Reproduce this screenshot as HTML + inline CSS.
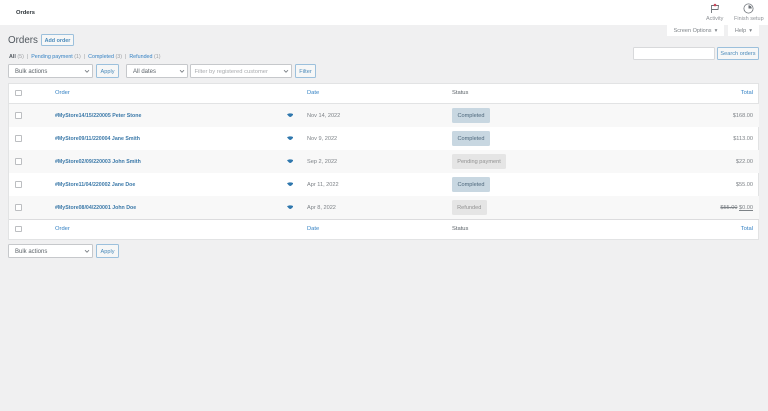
<!DOCTYPE html>
<html><head><meta charset="utf-8">
<style>
*{box-sizing:border-box}
html,body{margin:0;padding:0}
body{width:768px;height:411px;overflow:hidden;background:#f0f0f1;font-family:"Liberation Sans",sans-serif;font-size:5.6px;color:#5c6369;position:relative}
#w{position:absolute;left:0;top:0;width:768px;height:411px;filter:blur(.35px)}
.a{position:absolute;white-space:nowrap}
.l{color:#3582c4}
.btn{position:absolute;border:.7px solid #9cc0dc;border-radius:1.5px;background:#f6f7f7;color:#4a8aba;text-align:center;font-size:5.6px;line-height:14px;height:14px}
.sel{position:absolute;background:#fff;border:.7px solid #c6c8cb;border-radius:1.5px;height:14px;line-height:14.5px;padding-left:6px;font-size:6px;color:#5c6369}
.sel svg{position:absolute;right:2.5px;top:3.5px}
.row{position:absolute;left:8.5px;width:750px}
.cb{position:absolute;left:15px;width:6.5px;height:6.5px;background:#fff;border:.7px solid #bcbec1;border-radius:1px}
.badge{position:absolute;left:452px;height:15px;line-height:16px;border-radius:1.5px;text-align:center;font-size:5.6px}
.c{background:#c8d7e1;color:#4d677b;width:38px}
.p{background:#e5e5e5;color:#929292;width:54px}
.r{background:#e5e5e5;color:#929292;width:34.5px}
.num{color:#3a78a8;font-weight:bold;font-size:5.25px;left:55px}
.date{left:307px;color:#7d8287}
.tot{right:15px;color:#7d8287}
.eye{position:absolute;left:286.5px}
.h{font-size:5.8px}
</style></head><body><div id="w">
<div class="a" style="left:0;top:0;width:768px;height:25px;background:#fff"></div>
<div class="a" style="left:16px;top:9.5px;font-size:5.8px;font-weight:bold;color:#2c3338">Orders</div>

<svg class="a" style="left:710px;top:3px" width="10" height="11" viewBox="0 0 10 11" fill="none" stroke="#6d7278" stroke-width=".9"><path d="M1.5 10V2.500H8.500L8 6.500H1.500"/><circle cx="5" cy="2" r="1.300" fill="#c9485b" stroke="none"/></svg>
<div class="a" style="left:706px;top:15.5px;font-size:5.5px;color:#8f9398">Activity</div>
<svg class="a" style="left:743px;top:3px" width="11" height="11" viewBox="0 0 11 11" fill="none" stroke="#6d7278" stroke-width=".8"><circle cx="5.500" cy="5.500" r="4.600"/><path d="M5.500 5.500V2.200A3.300 3.300 0 0 1 8.800 5.500Z" fill="#6d7278" stroke="none"/></svg>
<div class="a" style="left:734px;top:15.5px;font-size:5.5px;color:#8f9398">Finish setup</div>

<div class="a" style="left:667px;top:25px;width:57px;height:11px;background:#fff;text-align:center;line-height:13px;font-size:5.5px;color:#7d8287">Screen Options &nbsp;▾</div>
<div class="a" style="left:728px;top:25px;width:31px;height:11px;background:#fff;text-align:center;line-height:13px;font-size:5.5px;color:#7d8287">Help &nbsp;▾</div>

<div class="a" style="left:8px;top:32.5px;font-size:9.8px;line-height:15px;color:#50575e">Orders</div>
<div class="btn" style="left:41px;top:34px;width:33px;height:12px;line-height:12px;font-size:5.4px;font-weight:bold">Add order</div>

<div class="a" style="left:9px;top:54px;font-size:5.35px;color:#9a9da1"><b style="color:#50575e">All</b> (5) &nbsp;| &nbsp;<span class="l">Pending payment</span> (1) &nbsp;| &nbsp;<span class="l">Completed</span> (3) &nbsp;| &nbsp;<span class="l">Refunded</span> (1)</div>

<div class="a" style="left:633px;top:47px;width:82px;height:13px;background:#fff;border:.7px solid #d8d9db;border-radius:1.5px"></div>
<div class="btn" style="left:717px;top:47px;width:42px;height:13px;line-height:13.5px">Search orders</div>

<div class="sel" style="left:8px;top:64px;width:85px">Bulk actions<svg width="6" height="5" viewBox="0 0 6 5" fill="none" stroke="#7d8287" stroke-width=".9"><path d="M1 1.200L3 3.200L5 1.200"/></svg></div>
<div class="btn" style="left:96px;top:64px;width:23px">Apply</div>
<div class="sel" style="left:126px;top:64px;width:62px">All dates<svg width="6" height="5" viewBox="0 0 6 5" fill="none" stroke="#7d8287" stroke-width=".9"><path d="M1 1.200L3 3.200L5 1.200"/></svg></div>
<div class="sel" style="left:190px;top:64px;width:102px;color:#a9abae;font-size:5.8px;padding-left:3.5px">Filter by registered customer<svg width="6" height="5" viewBox="0 0 6 5" fill="none" stroke="#7d8287" stroke-width=".9"><path d="M1 1.200L3 3.200L5 1.200"/></svg></div>
<div class="btn" style="left:295px;top:64px;width:21px">Filter</div>

<div class="a" style="left:8px;top:83px;width:751px;height:156.5px;background:#fff;border:.6px solid #e2e3e4"></div>
<div class="row" style="top:103px;height:.7px;background:#e2e3e4"></div>
<div class="row" style="top:103.5px;height:23px;background:#f8f8f8"></div>
<div class="row" style="top:149.5px;height:23px;background:#f8f8f8"></div>
<div class="row" style="top:195.5px;height:23px;background:#f8f8f8"></div>
<div class="row" style="top:218.5px;height:.7px;background:#dcdcde"></div>

<div class="cb" style="top:89.5px"></div>
<div class="a l h" style="left:55px;top:90px">Order</div>
<div class="a l h" style="left:307px;top:90px">Date</div>
<div class="a h" style="left:452px;top:90px">Status</div>
<div class="a l h" style="right:15px;top:90px">Total</div>

<div class="cb" style="top:112px"></div>
<div class="a num" style="top:112.5px">#MyStore14/15/220005 Peter Stone</div>
<svg class="eye" style="top:113px" width="6.500" height="4" viewBox="0 0 6.500 4"><path d="M0 1.200C2 .1 4.500 .1 6.500 1.200C5 3.200 4 4 3.250 4S1.500 3.200 0 1.200Z" fill="#2f77ad"/></svg>
<div class="a date" style="top:113px">Nov 14, 2022</div>
<div class="badge c" style="top:108px">Completed</div>
<div class="a tot" style="top:113px">$168.00</div>

<div class="cb" style="top:135px"></div>
<div class="a num" style="top:135.5px">#MyStore09/11/220004 Jane Smith</div>
<svg class="eye" style="top:136px" width="6.500" height="4" viewBox="0 0 6.500 4"><path d="M0 1.200C2 .1 4.500 .1 6.500 1.200C5 3.200 4 4 3.250 4S1.500 3.200 0 1.200Z" fill="#2f77ad"/></svg>
<div class="a date" style="top:136px">Nov 9, 2022</div>
<div class="badge c" style="top:130.5px">Completed</div>
<div class="a tot" style="top:136px">$113.00</div>

<div class="cb" style="top:158px"></div>
<div class="a num" style="top:158.5px">#MyStore02/09/220003 John Smith</div>
<svg class="eye" style="top:159px" width="6.500" height="4" viewBox="0 0 6.500 4"><path d="M0 1.200C2 .1 4.500 .1 6.500 1.200C5 3.200 4 4 3.250 4S1.500 3.200 0 1.200Z" fill="#2f77ad"/></svg>
<div class="a date" style="top:159px">Sep 2, 2022</div>
<div class="badge p" style="top:153.5px">Pending payment</div>
<div class="a tot" style="top:159px">$22.00</div>

<div class="cb" style="top:181px"></div>
<div class="a num" style="top:181.5px">#MyStore11/04/220002 Jane Doe</div>
<svg class="eye" style="top:182px" width="6.500" height="4" viewBox="0 0 6.500 4"><path d="M0 1.200C2 .1 4.500 .1 6.500 1.200C5 3.200 4 4 3.250 4S1.500 3.200 0 1.200Z" fill="#2f77ad"/></svg>
<div class="a date" style="top:182px">Apr 11, 2022</div>
<div class="badge c" style="top:176.5px">Completed</div>
<div class="a tot" style="top:182px">$55.00</div>

<div class="cb" style="top:204px"></div>
<div class="a num" style="top:204.5px">#MyStore08/04/220001 John Doe</div>
<svg class="eye" style="top:205px" width="6.500" height="4" viewBox="0 0 6.500 4"><path d="M0 1.200C2 .1 4.500 .1 6.500 1.200C5 3.200 4 4 3.250 4S1.500 3.200 0 1.200Z" fill="#2f77ad"/></svg>
<div class="a date" style="top:205px">Apr 8, 2022</div>
<div class="badge r" style="top:199.5px">Refunded</div>
<div class="a tot" style="top:205px"><s>$55.00</s> <u>$0.00</u></div>

<div class="cb" style="top:225.5px"></div>
<div class="a l h" style="left:55px;top:226px">Order</div>
<div class="a l h" style="left:307px;top:226px">Date</div>
<div class="a h" style="left:452px;top:226px">Status</div>
<div class="a l h" style="right:15px;top:226px">Total</div>

<div class="sel" style="left:8px;top:244px;width:85px">Bulk actions<svg width="6" height="5" viewBox="0 0 6 5" fill="none" stroke="#7d8287" stroke-width=".9"><path d="M1 1.200L3 3.200L5 1.200"/></svg></div>
<div class="btn" style="left:96px;top:244px;width:23px">Apply</div>
</div></body></html>
